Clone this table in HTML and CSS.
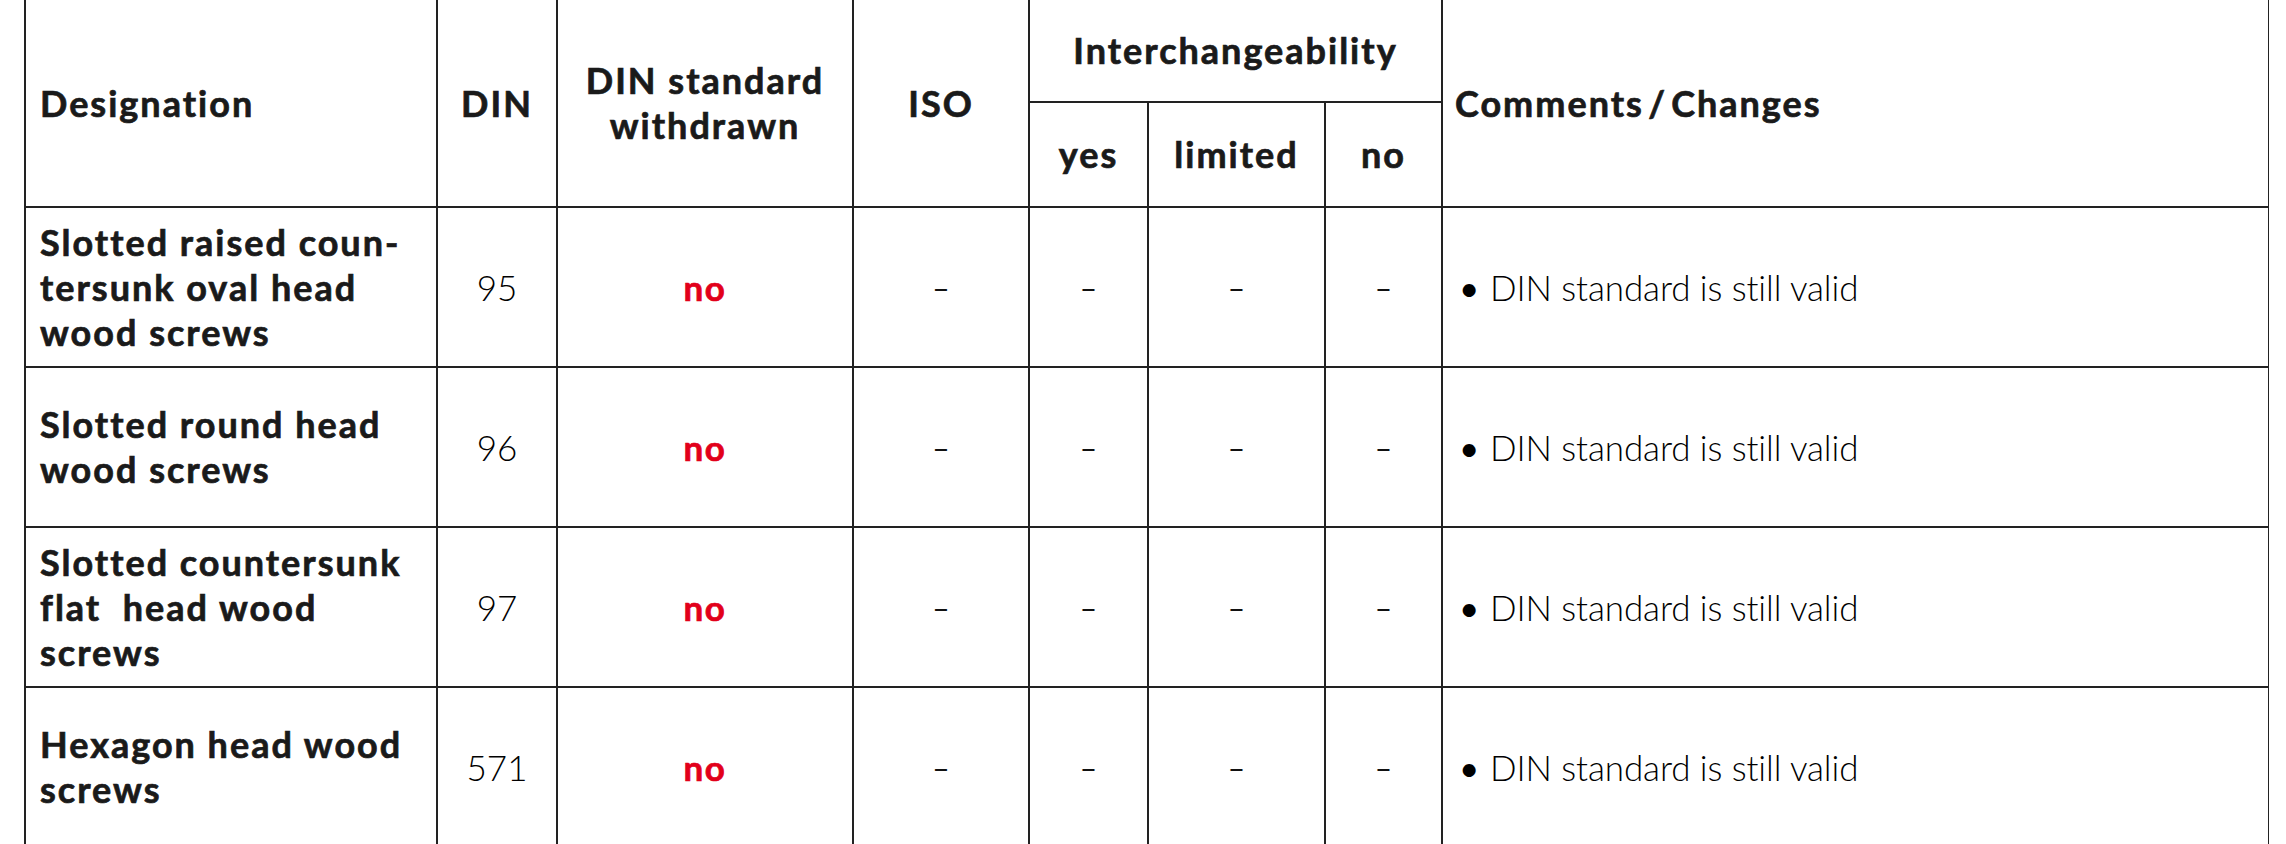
FILE: index.html
```html
<!DOCTYPE html>
<html lang="en">
<head>
<meta charset="utf-8">
<title>DIN wood screws</title>
<link rel="stylesheet" href="styles.css">
</head>
<body>
<table class="din-table">
  <colgroup>
    <col class="c-desig">
    <col class="c-din">
    <col class="c-withdrawn">
    <col class="c-iso">
    <col class="c-yes">
    <col class="c-limited">
    <col class="c-no">
    <col class="c-comments">
  </colgroup>
  <thead>
    <tr class="head-top">
      <th rowspan="2" class="left thin-r">Designation</th>
      <th rowspan="2" class="center">DIN</th>
      <th rowspan="2" class="center">DIN standard<br>withdrawn</th>
      <th rowspan="2" class="center">ISO</th>
      <th colspan="3" class="center inter">Interchangeability</th>
      <th rowspan="2" class="left comments-h">Comments&#8202;/&#8202;Changes</th>
    </tr>
    <tr class="head-sub">
      <th class="center">yes</th>
      <th class="center thin-r">limited</th>
      <th class="center thin-r">no</th>
    </tr>
  </thead>
  <tbody>
    <tr class="row thin-b">
      <td class="desig thin-r">Slotted raised coun-<br>tersunk oval head<br>wood screws</td>
      <td class="num">95</td>
      <td class="red">no</td>
      <td class="dash">–</td>
      <td class="dash">–</td>
      <td class="dash thin-r">–</td>
      <td class="dash thin-r">–</td>
      <td class="comment"><span class="bullet">•</span>DIN standard is still valid</td>
    </tr>
    <tr class="row">
      <td class="desig thin-r">Slotted round head<br>wood screws</td>
      <td class="num">96</td>
      <td class="red">no</td>
      <td class="dash">–</td>
      <td class="dash">–</td>
      <td class="dash thin-r">–</td>
      <td class="dash thin-r">–</td>
      <td class="comment"><span class="bullet">•</span>DIN standard is still valid</td>
    </tr>
    <tr class="row thin-b">
      <td class="desig thin-r">Slotted countersunk<br>flat&nbsp; head wood<br>screws</td>
      <td class="num">97</td>
      <td class="red">no</td>
      <td class="dash">–</td>
      <td class="dash">–</td>
      <td class="dash thin-r">–</td>
      <td class="dash thin-r">–</td>
      <td class="comment"><span class="bullet">•</span>DIN standard is still valid</td>
    </tr>
    <tr class="row">
      <td class="desig thin-r">Hexagon head wood<br>screws</td>
      <td class="num">571</td>
      <td class="red">no</td>
      <td class="dash">–</td>
      <td class="dash">–</td>
      <td class="dash thin-r">–</td>
      <td class="dash thin-r">–</td>
      <td class="comment"><span class="bullet">•</span>DIN standard is still valid</td>
    </tr>
  </tbody>
</table>
</body>
</html>
```
FILE: styles.css
```css
html, body {
  margin: 0;
  padding: 0;
  background: #ffffff;
}

body {
  font-family: "Lato", "Liberation Sans", sans-serif;
  color: #1a1a1a;
}

.din-table {
  margin-left: 24px;
  width: 2244px;
  border-collapse: collapse;
  table-layout: fixed;
}

.c-desig { width: 412px; }
.c-din { width: 120px; }
.c-withdrawn { width: 296px; }
.c-iso { width: 176px; }
.c-yes { width: 119px; }
.c-limited { width: 177px; }
.c-no { width: 117px; }
.c-comments { width: 826px; }

.din-table th,
.din-table td {
  border: 2px solid #222;
  padding: 0;
  vertical-align: middle;
  line-height: 45px;
}

.din-table thead tr:first-child th {
  border-top: none;
}

.din-table th {
  font-weight: 700;
  font-size: 36px;
  letter-spacing: 2px;
  -webkit-text-stroke: 0.7px currentColor;
}

.head-top { height: 102px; }
.head-sub { height: 105px; }

.din-table th.left { text-align: left; }
.din-table th.center { text-align: center; }

th.left { padding-left: 14px; }
th.comments-h { padding-left: 12px; }

.din-table .thin-r { border-right-width: 1px; }
.din-table .comments-h { border-right-width: 1px; }
.din-table td.comment { border-right-width: 1px; }
.din-table .thin-b td { border-bottom-width: 1px; }

.row { height: 160px; }

.desig {
  font-weight: 700;
  font-size: 36px;
  letter-spacing: 2px;
  -webkit-text-stroke: 0.7px currentColor;
  padding-left: 14px !important;
}

.num,
.dash,
.comment {
  font-weight: 300;
  font-size: 35px;
  color: #000;
}

.num,
.dash,
.red {
  text-align: center;
}

.dash {
  font-size: 30px;
  font-weight: 400;
  color: #111;
}

.red {
  color: #e2001a;
  font-weight: 700;
  font-size: 35px;
  letter-spacing: 1.6px;
  -webkit-text-stroke: 0.7px currentColor;
}

.comment {
  padding-left: 16px !important;
  letter-spacing: -0.1px;
}

.bullet {
  display: inline-block;
  width: 31px;
  font-weight: 400;
}
```
